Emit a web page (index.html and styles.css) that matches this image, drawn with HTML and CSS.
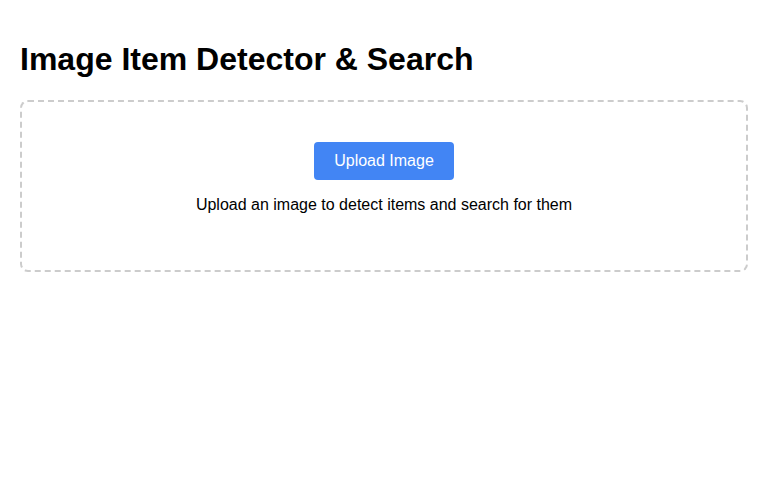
FILE: index.html
```html
<!DOCTYPE html>
<html lang="en">
<head>
    <meta charset="UTF-8">
    <meta name="viewport" content="width=device-width, initial-scale=1.0">
    <title>Image Item Detector &amp; Search</title>
    <link rel="stylesheet" href="styles.css">
</head>
<body>
    <h1>Image Item Detector &amp; Search</h1>
    <div class="upload-area">
        <button class="upload-btn" id="upload-btn">Upload Image</button>
        <p class="upload-hint">Upload an image to detect items and search for them</p>
    </div>
</body>
</html>
```

FILE: styles.css
```css
body {
    margin: 0;
    padding: 20px;
    font-family: 'Liberation Sans', Arial, sans-serif;
    color: #000;
    background: #fff;
}
h1 {
    font-size: 32px;
    margin: 21.44px 0;
}
.upload-area {
    border: 2px dashed #ccc;
    border-radius: 8px;
    padding: 40px;
    text-align: center;
}
.upload-btn {
    background: #4285f4;
    color: #fff;
    border: none;
    border-radius: 4px;
    padding: 10px 20px;
    font-family: inherit;
    font-size: 16px;
    cursor: pointer;
}
.upload-hint {
    font-size: 16px;
    margin: 16px 0;
}
```
